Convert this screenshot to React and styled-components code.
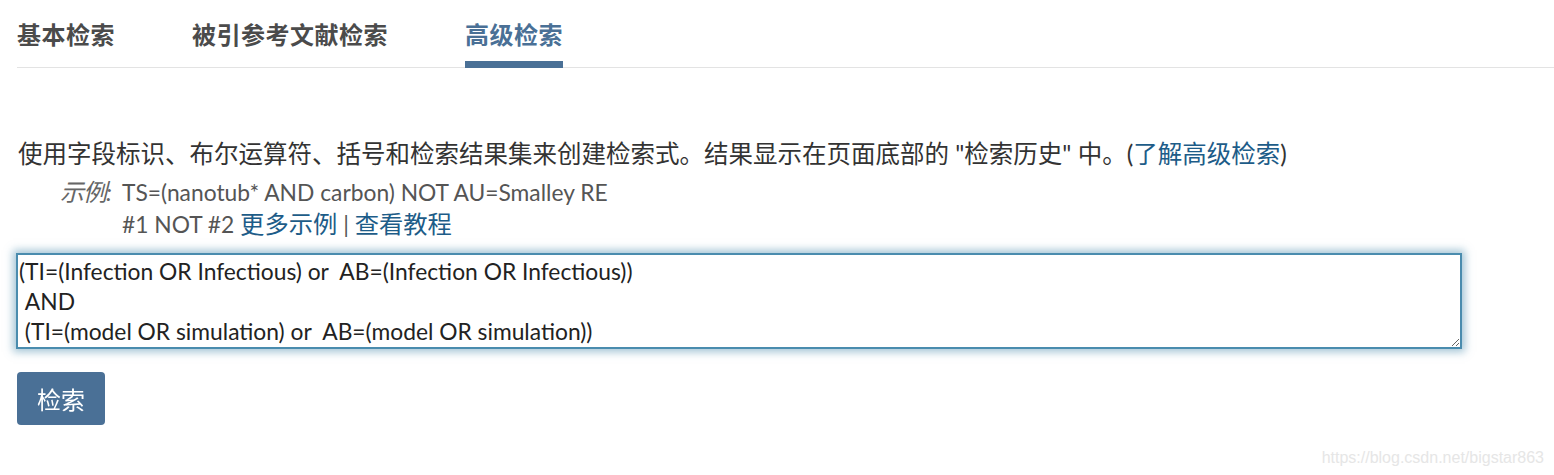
import React, { useState, useRef, useEffect } from 'react';
import styled, { createGlobalStyle } from 'styled-components';

const Global = createGlobalStyle`
  html, body {
    margin: 0;
    padding: 0;
    background: #fff;
  }
  body {
    font-family: Lato, "Noto Sans CJK SC", sans-serif;
    color: #333;
  }
`;

const Page = styled.div`
  position: relative;
  width: 1554px;
  height: 475px;
  padding: 0 0 0 17px;
  box-sizing: border-box;
  overflow: hidden;
`;

const Tabs = styled.div`
  display: flex;
  align-items: flex-end;
  height: 68px;
  border-bottom: 1px solid #e3e3e3;
  box-sizing: border-box;
`;

const Tab = styled.div`
  height: 100%;
  box-sizing: border-box;
  padding-top: 15px;
  margin-right: 77px;
  font-size: 24px;
  font-weight: bold;
  color: ${p => (p.$active ? '#4a7096' : '#4b4b4b')};
  border-bottom: 7px solid ${p => (p.$active ? '#4a7096' : 'transparent')};
  margin-bottom: -1px;
  letter-spacing: 0.5px;
`;

const Intro = styled.p`
  margin: 70px 0 0 1px;
  font-size: 24.5px;
  color: #333;
  line-height: 32px;
`;

const Link = styled.a`
  color: #1d5c88;
  text-decoration: none;
  cursor: pointer;
`;

const Example = styled.div`
  display: grid;
  grid-template-columns: 62px auto;
  margin: 6px 0 0 43px;
  font-size: 22.8px;
  line-height: 32px;
  color: #555;
`;

const ExLabel = styled.span`
  font-style: italic;
  color: #666;
  font-size: 24px;
  letter-spacing: -1px;
`;

const ExLine = styled.div`
  grid-column: 2;
  white-space: pre;
`;

const BigLink = styled(Link)`
  font-size: 24.3px;
`;

const Query = styled.textarea`
  display: block;
  width: 1446px;
  height: 96px;
  margin: 13px 0 0 -1px;
  padding: 1px 1px 3px;
  box-sizing: border-box;
  border: 2px solid #4a8cae;
  box-shadow: 0 0 8px 3px rgba(74, 140, 174, 0.5);
  outline: none;
  font-family: Lato, "Noto Sans CJK SC", sans-serif;
  font-size: 22.8px;
  line-height: 30px;
  color: #222;
  resize: both;
  overflow: hidden;
`;

const SearchButton = styled.button`
  display: block;
  margin-top: 23px;
  width: 88px;
  height: 53px;
  border: none;
  border-radius: 4px;
  background: #4a7096;
  color: #fff;
  font-family: Lato, "Noto Sans CJK SC", sans-serif;
  font-size: 24px;
  cursor: pointer;
`;

const Watermark = styled.div`
  position: absolute;
  right: 10px;
  bottom: 8px;
  font-family: "Liberation Sans", Arial, sans-serif;
  font-size: 16px;
  color: #e6e6e6;
`;

const initialQuery =
  '(TI=(Infection OR Infectious) or  AB=(Infection OR Infectious))\n AND\n (TI=(model OR simulation) or  AB=(model OR simulation))';

export default function App() {
  const [query, setQuery] = useState(initialQuery);
  const ref = useRef(null);

  useEffect(() => {
    const el = ref.current;
    if (el) {
      el.focus();
      el.setSelectionRange(el.value.length, el.value.length);
    }
  }, []);

  return (
    <Page>
      <Global />
      <Tabs>
        <Tab>基本检索</Tab>
        <Tab>被引参考文献检索</Tab>
        <Tab $active>高级检索</Tab>
      </Tabs>
      <Intro>
        使用字段标识、布尔运算符、括号和检索结果集来创建检索式。结果显示在页面底部的 "检索历史" 中。(<Link>了解高级检索</Link>)
      </Intro>
      <Example>
        <ExLabel>示例:</ExLabel>
        <span>TS=(nanotub* AND carbon) NOT AU=Smalley RE</span>
        <ExLine>
          #1 NOT #2 <BigLink>更多示例</BigLink> | <BigLink>查看教程</BigLink>
        </ExLine>
      </Example>
      <Query ref={ref} value={query} onChange={e => setQuery(e.target.value)} spellCheck={false} />
      <SearchButton>检索</SearchButton>
      <Watermark>https://blog.csdn.net/bigstar863</Watermark>
    </Page>
  );
}
